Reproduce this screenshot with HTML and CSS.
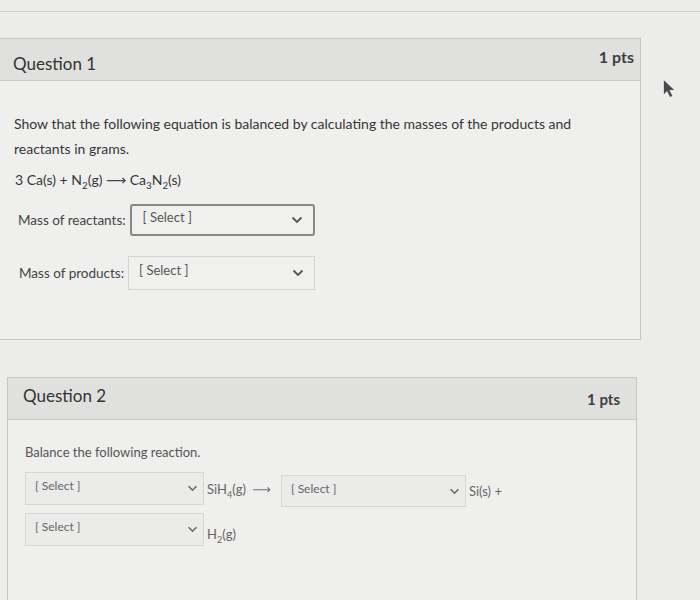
FILE: index.html
```html
<!DOCTYPE html>
<html>
<head>
<meta charset="utf-8">
<link rel="stylesheet" href="styles.css">
</head>
<body>
<div class="topline"></div>
<div class="quiz">
  <div class="card card1">
    <div class="card-head">
      <span class="q-title">Question 1</span>
      <span class="q-pts">1 pts</span>
    </div>
    <div class="card-body body1">
      <p class="prompt">Show that the following equation is balanced by calculating the masses of the products and reactants in grams.</p>
      <p class="equation">3 Ca(s) + N<sub>2</sub>(g) <span class="arrow">⟶</span> Ca<sub>3</sub>N<sub>2</sub>(s)</p>
      <div class="field-row row-reactants">
        <span class="label">Mass of reactants:</span>
        <div class="select select-dark"><span class="sel-text">[ Select ]</span><svg class="chev" viewBox="0 0 12 8" width="12" height="8"><path d="M1.5 1.5 L6 6 L10.5 1.5" fill="none" stroke="#555" stroke-width="1.8"/></svg></div>
      </div>
      <div class="field-row row-products">
        <span class="label">Mass of products:</span>
        <div class="select select-light"><span class="sel-text">[ Select ]</span><svg class="chev" viewBox="0 0 12 8" width="12" height="8"><path d="M1.5 1.5 L6 6 L10.5 1.5" fill="none" stroke="#555" stroke-width="1.8"/></svg></div>
      </div>
    </div>
  </div>

  <div class="card card2">
    <div class="card-head head2">
      <span class="q-title">Question 2</span>
      <span class="q-pts">1 pts</span>
    </div>
    <div class="card-body body2">
      <p class="prompt2">Balance the following reaction.</p>
      <div class="rx-row rx1">
        <div class="select select-q2 w1"><span class="sel-text">[ Select ]</span><svg class="chev" viewBox="0 0 12 8" width="11" height="7"><path d="M1.5 1.5 L6 6 L10.5 1.5" fill="none" stroke="#666" stroke-width="1.8"/></svg></div>
        <span class="chem">SiH<sub>4</sub>(g) <span class="arrow small">⟶</span></span>
        <div class="select select-q2 w2"><span class="sel-text">[ Select ]</span><svg class="chev" viewBox="0 0 12 8" width="11" height="7"><path d="M1.5 1.5 L6 6 L10.5 1.5" fill="none" stroke="#666" stroke-width="1.8"/></svg></div>
        <span class="chem">Si(s) +</span>
      </div>
      <div class="rx-row rx2">
        <div class="select select-q2 w1"><span class="sel-text">[ Select ]</span><svg class="chev" viewBox="0 0 12 8" width="11" height="7"><path d="M1.5 1.5 L6 6 L10.5 1.5" fill="none" stroke="#666" stroke-width="1.8"/></svg></div>
        <span class="chem">H<sub>2</sub>(g)</span>
      </div>
    </div>
  </div>
</div>
<svg class="cursor" viewBox="0 0 16 22" width="15" height="21"><path d="M2 1 L2 16 L5.5 12.5 L8.5 19 L11 18 L8 11.5 L13 11.5 Z" fill="#4a4a4a"/></svg>
</body>
</html>
```
FILE: styles.css
```css
html, body {
  margin: 0;
  padding: 0;
}
body {
  width: 700px;
  height: 600px;
  overflow: hidden;
  background: #ececeb;
  font-family: Lato, "Liberation Sans", sans-serif;
  color: #3c3c3c;
  position: relative;
}
.topline {
  height: 11px;
  border-bottom: 1px solid #cfcfcf;
}
.quiz {
  padding-top: 26px;
}
.card {
  border: 1px solid #c6c6c6;
  background: #efefee;
  box-sizing: border-box;
}
.card1 {
  margin-left: -1px;
  width: 642px;
}
.card2 {
  margin-left: 7px;
  margin-top: 37px;
  width: 630px;
  height: 240px;
}
.card-head {
  height: 41px;
  background: #e0e0df;
  border-bottom: 1px solid #c8c8c8;
  display: flex;
  justify-content: space-between;
  align-items: center;
  padding: 0 6px 0 13px;
}
.head2 {
  padding: 0 16px 0 15px;
}
.q-title {
  font-size: 17px;
  color: #333;
  padding-top: 8px;
}
.head2 .q-title {
  padding-top: 0;
  margin-top: -6px;
}
.q-pts {
  font-size: 16px;
  font-weight: 700;
  color: #3e3e3e;
  margin-top: -6px;
}
.head2 .q-pts {
  font-size: 15px;
  margin-top: 0;
}
.body1 {
  height: 258px;
  padding: 30px 14px 0 14px;
  box-sizing: border-box;
}
.prompt {
  margin: 0;
  font-size: 14px;
  line-height: 25px;
  width: 580px;
  color: #363636;
}
.equation {
  margin: 7px 0 0 1px;
  font-size: 14px;
  line-height: 24px;
  color: #363636;
}
sub {
  font-size: 0.7em;
  line-height: 0;
}
.arrow {
  font-family: "DejaVu Sans", sans-serif;
  font-size: 14px;
  color: #444;
}
.arrow.small {
  font-size: 13px;
  color: #777;
  margin-left: 3px;
}
.field-row {
  display: flex;
  align-items: center;
  font-size: 13.5px;
  color: #444;
}
.row-reactants {
  margin-top: 12px;
  padding-left: 4px;
}
.row-products {
  margin-top: 20px;
  padding-left: 5px;
}
.label {
  margin-right: 4px;
}
.select {
  display: flex;
  align-items: center;
  justify-content: space-between;
  box-sizing: border-box;
  height: 32px;
  padding: 0 10px 0 11px;
}
.sel-text {
  font-size: 13px;
  color: #555;
  margin-top: -6px;
}
.select-dark {
  width: 185px;
  border: 2px solid #888;
  border-radius: 3px;
  background: #f0f0ef;
}
.select-light {
  width: 187px;
  height: 34px;
  border: 1px solid #d4d4d4;
  background: #f0f0ef;
  padding-left: 10px;
}
.chev {
  display: block;
}
.body2 {
  padding: 21px 0 0 17px;
}
.prompt2 {
  margin: 0;
  font-size: 13px;
  line-height: 22px;
  color: #555;
}
.rx-row {
  display: flex;
  align-items: center;
}
.rx1 {
  margin-top: 7px;
}
.rx2 {
  margin-top: 6px;
}
.select-q2 {
  border: 1px solid #d6d6d6;
  background: #ebebea;
  padding: 0 5px 0 9px;
}
.select-q2 .sel-text {
  font-size: 12px;
  color: #666;
}
.w1 {
  width: 179px;
  height: 33px;
}
.w2 {
  width: 185px;
  height: 32px;
  margin-top: 5px;
}
.chem {
  font-size: 13px;
  color: #666;
  margin: 0 5px 0 3px;
}
.rx1 .chem:first-of-type {
  margin-right: 10px;
}
.rx1 .chem:last-child {
  margin-top: 5px;
}
.rx2 .chem {
  margin-top: 8px;
}
.cursor {
  position: absolute;
  left: 662px;
  top: 79px;
}
```
